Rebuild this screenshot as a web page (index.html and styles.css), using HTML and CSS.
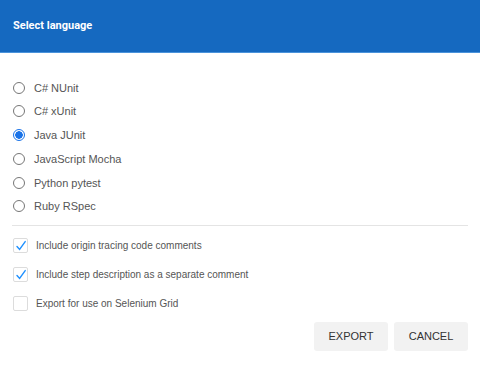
FILE: index.html
```html
<!DOCTYPE html>
<html lang="en">
<head>
    <meta charset="UTF-8">
    <meta name="viewport" content="width=device-width, initial-scale=1.0">
    <title>Select language</title>
    <link rel="stylesheet" href="styles.css">
</head>
<body>
    <div class="dialog">
        <div class="header">Select language</div>

        <div class="content">
            <!-- Language options -->
            <div class="options">
                <label class="radio"><span class="dot"></span>C# NUnit</label>
                <label class="radio"><span class="dot"></span>C# xUnit</label>
                <label class="radio checked"><span class="dot"></span>Java JUnit</label>
                <label class="radio"><span class="dot"></span>JavaScript Mocha</label>
                <label class="radio"><span class="dot"></span>Python pytest</label>
                <label class="radio"><span class="dot"></span>Ruby RSpec</label>
            </div>

            <hr class="divider">

            <!-- Export settings -->
            <div class="settings">
                <label class="check">
                    <span class="box"><svg width="12" height="12" viewBox="0 0 12 12"><path d="M2 6.5 L4.6 9.4 L10.2 1.6" fill="none" stroke="#1e90ff" stroke-width="1.4" stroke-linecap="round"/></svg></span>
                    Include origin tracing code comments
                </label>
                <label class="check">
                    <span class="box"><svg width="12" height="12" viewBox="0 0 12 12"><path d="M2 6.5 L4.6 9.4 L10.2 1.6" fill="none" stroke="#1e90ff" stroke-width="1.4" stroke-linecap="round"/></svg></span>
                    Include step description as a separate comment
                </label>
                <label class="check">
                    <span class="box"></span>
                    Export for use on Selenium Grid
                </label>
            </div>

            <div class="actions">
                <button>EXPORT</button>
                <button>CANCEL</button>
            </div>
        </div>
    </div>
</body>
</html>
```

FILE: styles.css
```css
/* General Styles */
body {
    margin: 0;
    padding: 0;
    font-family: 'Liberation Sans', Arial, sans-serif;
    background: #fff;
    color: #555;
}

.dialog {
    width: 480px;
    height: 367px;
}

.header {
    height: 52px;
    line-height: 52px;
    padding-left: 13px;
    background: #1569c0;
    border-bottom: 1px solid #4a93db;
    color: #fff;
    font-family: Roboto, sans-serif;
    font-size: 11px;
    font-weight: bold;
}

.content {
    padding: 27px 12px 0 12px;
}

.options {
    display: flex;
    flex-direction: column;
    gap: 8.8px;
}

.radio {
    display: flex;
    align-items: center;
    height: 15px;
    font-size: 11px;
}

.dot {
    width: 10px;
    height: 10px;
    border: 1px solid #767676;
    border-radius: 50%;
    margin: 0 9px 0 1px;
    box-sizing: content-box;
}

.radio.checked .dot {
    border-color: #1a73e8;
    background: radial-gradient(circle, #1a73e8 0 3.5px, #fff 4px);
}

.divider {
    border: none;
    border-top: 1px solid #e4e4e4;
    margin: 11px 0 0 0;
}

.settings {
    display: flex;
    flex-direction: column;
    gap: 13px;
    padding-top: 12px;
}

.check {
    display: flex;
    align-items: center;
    height: 16px;
    font-size: 10px;
}

.box {
    width: 13px;
    height: 13px;
    border: 1px solid #dcdcdc;
    border-radius: 2px;
    margin: 0 8px 0 1px;
    display: flex;
    align-items: center;
    justify-content: center;
}

.actions {
    display: flex;
    justify-content: flex-end;
    gap: 6px;
    margin-top: 10px;
}

button {
    width: 74px;
    height: 29px;
    border: none;
    border-radius: 3px;
    background: #f2f2f2;
    color: #333;
    font-family: 'Liberation Sans', Arial, sans-serif;
    font-size: 11px;
    cursor: pointer;
}
```
